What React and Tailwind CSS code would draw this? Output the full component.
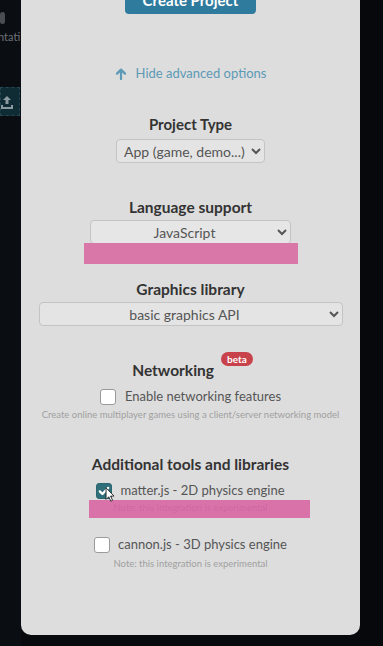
import React from 'react';

const font = { fontFamily: 'Lato, "Open Sans", sans-serif' };

const Check = ({ checked }) => (
  <span
    className={`flex h-4 w-4 shrink-0 items-center justify-center rounded-[3px] border ${
      checked ? 'border-[#2b6670] bg-[#2f6f7a]' : 'border-[#9a9a9a] bg-white'
    }`}
  >
    {checked && (
      <svg viewBox="0 0 16 16" className="h-3.5 w-3.5" fill="none" stroke="white" strokeWidth="2.6" strokeLinecap="round" strokeLinejoin="round">
        <path d="M3.2 8.4l3 3 6.6-7" />
      </svg>
    )}
  </span>
);

export default function App() {
  return (
    <div className="flex h-[646px] w-[383px] overflow-hidden bg-[#07090d]" style={font}>
      {/* left dark strip with bits of the page behind */}
      <div className="relative w-[21px] shrink-0 bg-[#0a0d12]">
        <div className="absolute left-0 top-[12px] h-[12px] w-[5px] rounded-sm bg-[#4a4d52]" />
        <div className="absolute left-[-2px] top-[29px] text-[11px] text-[#6f7378]">ntati</div>
        <div className="absolute left-0 top-[87px] flex h-[29px] w-[20px] items-center border border-dashed border-[#244852] bg-[#0f2b33]">
          <svg viewBox="0 0 16 16" className="ml-[-2px] h-4 w-4" fill="#8a9aa0">
            <path d="M8 2l4 4H9.5v4h-3V6H4z" />
            <path d="M2 11h2v2h8v-2h2v4H2z" />
          </svg>
        </div>
      </div>

      {/* dialog panel */}
      <div className="flex h-[635px] w-[339px] shrink-0 flex-col items-center rounded-b-[10px] bg-[#dddddd] px-[17px] text-center">
        <button className="mt-[-18px] flex h-[32px] w-[131px] shrink-0 items-start justify-center overflow-hidden rounded-[4px] bg-[#2f7b9d] pt-[9px] text-[15px] font-bold leading-[18px] text-white">
          Create Project
        </button>

        <div className="mt-[50px] flex h-5 items-center gap-[9px] text-[13px] text-[#5c9ab6]">
          <svg viewBox="0 0 12 12" className="h-[12px] w-[12px]" fill="none" stroke="#5c9ab6" strokeWidth="2.2" strokeLinecap="round" strokeLinejoin="round">
            <path d="M6 11V2M2 5.6L6 1.6l4 4" />
          </svg>
          <span>Hide advanced options</span>
        </div>

        <div className="mt-[30px] text-[15px] font-bold leading-5 text-[#333]">Project Type</div>
        <select className="mt-[5px] h-6 rounded-[4px] border border-[#c4c4c4] bg-[#e4e4e4] px-[3px] text-[14px] text-[#555]">
          <option>App (game, demo...)</option>
        </select>

        <div className="mt-[34px] text-[15.5px] font-bold leading-5 text-[#333]">Language support</div>
        <div className="relative mt-[3px] flex flex-col items-center">
          <select className="h-6 w-[201px] rounded-[4px] border border-[#c4c4c4] bg-[#e6e6e6] text-[14px] text-[#555] [text-align-last:center]">
            <option>JavaScript</option>
          </select>
          <div className="mt-[-1px] h-[21px] w-[214px] bg-[#d977a9]" />
        </div>

        <div className="mt-[15px] text-[15.5px] font-bold leading-5 text-[#333]">Graphics library</div>
        <select className="mt-[3px] h-6 w-[304px] shrink-0 rounded-[4px] border border-[#c4c4c4] bg-[#e4e4e4] text-[14px] text-[#555] [text-align-last:center]">
          <option>basic graphics API</option>
        </select>

        <div className="mt-[26px] flex items-start gap-[7px] pl-[4px]">
          <span className="pt-[8px] text-[15.5px] font-bold leading-5 text-[#333]">Networking</span>
          <span className="flex h-[14px] items-center rounded-full bg-[#c8424b] px-[6px] text-[10px] font-bold leading-none text-white">
            beta
          </span>
        </div>
        <label className="mt-[7px] flex h-5 items-center gap-[9px] text-[13px] text-[#555]">
          <Check />
          <span>Enable networking features</span>
        </label>
        <div className="mt-[1px] whitespace-nowrap text-[9.5px] leading-[14px] text-[#a0a0a0]">
          Create online multiplayer games using a client/server networking model
        </div>

        <div className="mt-[32px] text-[15.5px] font-bold leading-5 text-[#333]">Additional tools and libraries</div>
        <label className="mt-[7px] flex h-5 items-center gap-[8px] text-[13px] text-[#555]">
          <Check checked />
          <span>matter.js - 2D physics engine</span>
        </label>
        <div className="relative text-[9.5px] leading-[14px] text-[#a0a0a0]">
          Note: this integration is experimental
          <div className="absolute left-[-24px] top-[-1px] h-[18px] w-[221px] bg-[#d9579d] opacity-80" />
          <svg viewBox="0 0 12 18" className="absolute left-[-8px] top-[-14px] h-[16px] w-[11px]">
            <path d="M1 1v13l3-3 2.4 5 2-1-2.3-4.8H10z" fill="white" stroke="#222" strokeWidth="1" />
          </svg>
        </div>

        <label className="mt-[20px] flex h-5 items-center gap-[8px] text-[13px] text-[#555]">
          <Check />
          <span>cannon.js - 3D physics engine</span>
        </label>
        <div className="mt-[2px] text-[9.5px] leading-[14px] text-[#a0a0a0]">Note: this integration is experimental</div>
      </div>

      <div className="flex-1 bg-[#06080b]" />
    </div>
  );
}
